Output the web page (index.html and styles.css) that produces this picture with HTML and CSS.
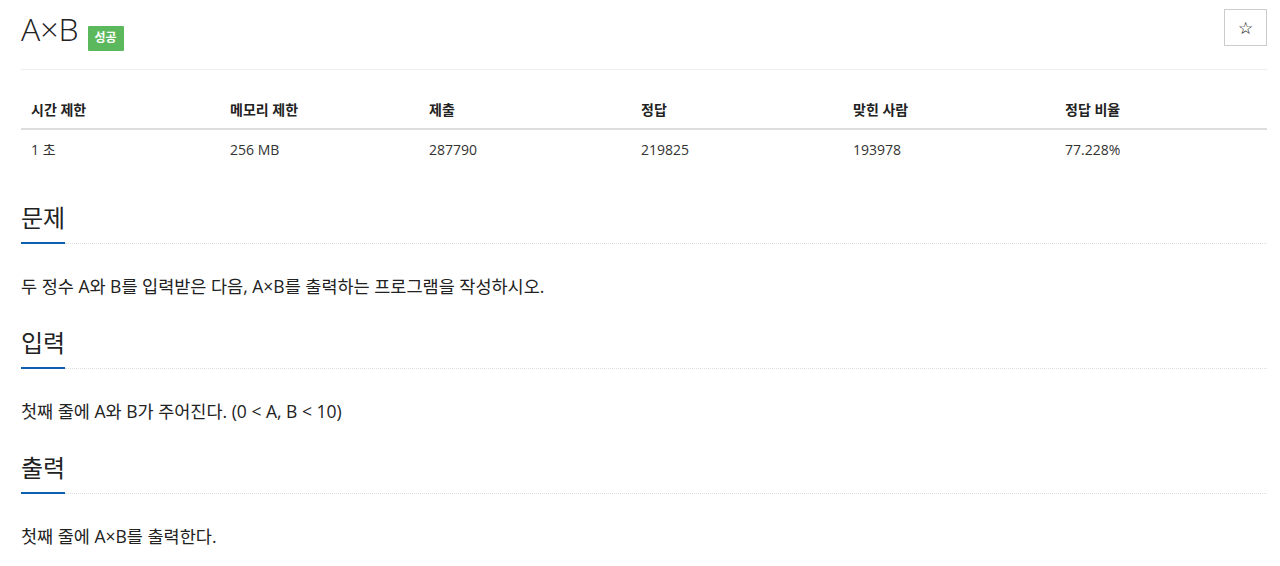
FILE: index.html
```html
<!DOCTYPE html>
<html lang="ko">
<head>
<meta charset="utf-8">
<title>A×B</title>
<link rel="stylesheet" href="styles.css">
</head>
<body>
<div class="page">
  <header class="page-header">
    <h1 class="title">A×B <span class="badge">성공</span></h1>
    <button class="star-btn" type="button">☆</button>
  </header>
  <table class="info">
    <colgroup>
      <col class="c1"><col class="c2"><col class="c3"><col class="c4"><col class="c5"><col class="c6">
    </colgroup>
    <thead>
      <tr><th>시간 제한</th><th>메모리 제한</th><th>제출</th><th>정답</th><th>맞힌 사람</th><th>정답 비율</th></tr>
    </thead>
    <tbody>
      <tr><td>1 초</td><td>256 MB</td><td>287790</td><td>219825</td><td>193978</td><td>77.228%</td></tr>
    </tbody>
  </table>
  <section class="sec first">
    <h2 class="headline"><span>문제</span></h2>
    <p class="desc">두 정수 A와 B를 입력받은 다음, A×B를 출력하는 프로그램을 작성하시오.</p>
  </section>
  <section class="sec">
    <h2 class="headline"><span>입력</span></h2>
    <p class="desc">첫째 줄에 A와 B가 주어진다. (0 &lt; A, B &lt; 10)</p>
  </section>
  <section class="sec">
    <h2 class="headline"><span>출력</span></h2>
    <p class="desc">첫째 줄에 A×B를 출력한다.</p>
  </section>
</div>
</body>
</html>
```

FILE: styles.css
```css
* { box-sizing: border-box; }
html, body { margin: 0; padding: 0; background: #fff; }
body {
  font-family: "Open Sans", "Noto Sans CJK KR", sans-serif;
  color: #333;
  font-size: 14px;
}
.page { padding: 0 13px 0 21px; }

.page-header {
  display: flex;
  justify-content: space-between;
  align-items: flex-start;
  height: 70px;
  padding-top: 9px;
  border-bottom: 1px solid #eee;
}
.title {
  margin: 0;
  font-size: 32px;
  font-weight: 300;
  line-height: 40px;
  color: #222;
  display: flex;
  align-items: baseline;
  gap: 9px;
}
.badge {
  display: inline-block;
  background: #5cb85c;
  color: #fff;
  font-size: 12px;
  font-weight: 700;
  line-height: 1;
  padding: 6px 7px 7px;
  border-radius: 1px;
  position: relative;
  top: 1px;
}
.star-btn {
  width: 43px;
  height: 37px;
  border: 1px solid #ccc;
  background: #fff;
  font-size: 17px;
  color: #000;
  padding: 0;
  font-family: "DejaVu Sans", sans-serif;
}

.info {
  width: 100%;
  table-layout: fixed;
  border-collapse: collapse;
  margin-top: 22px;
}
.info .c1, .info .c2 { width: 199px; }
.info .c3, .info .c4, .info .c5, .info .c6 { width: 212px; }
.info th, .info td {
  text-align: left;
  padding: 8px 10px;
  line-height: 20px;
  font-size: 14px;
}
.info th {
  font-weight: 700;
  color: #222;
  border-bottom: 2px solid #ddd;
}
.info td { color: #333; padding-top: 10px; }

.sec.first { margin-top: 35px; }
.sec { margin-top: 30px; }
.headline {
  margin: 0;
  display: flex;
  align-items: flex-end;
  font-size: 24px;
  font-weight: 400;
  line-height: 30px;
  color: #222;
}
.headline span {
  display: block;
  padding-bottom: 9px;
  border-bottom: 2px solid #0f5fb0;
}
.headline::after {
  content: "";
  flex: 1;
  border-bottom: 1px dotted #ddd;
}
.desc {
  margin: 30px 0 0;
  font-size: 17.5px;
  line-height: 24px;
  color: #222;
}
```
